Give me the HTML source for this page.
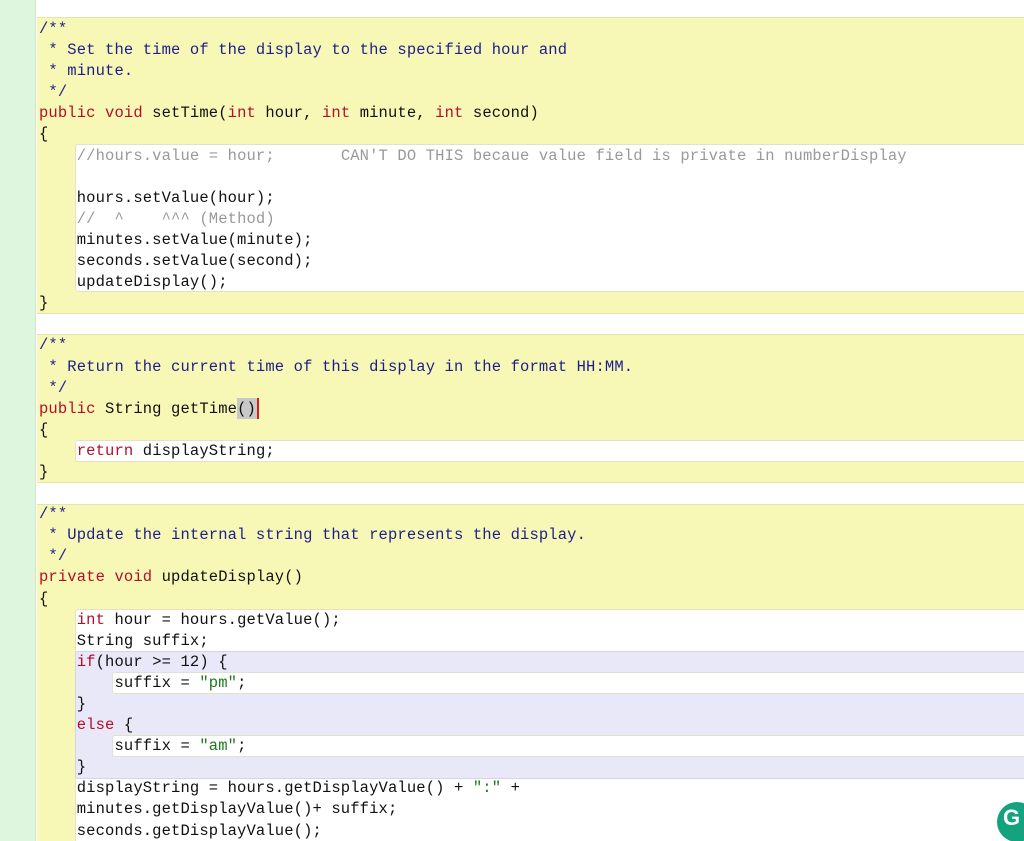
<!DOCTYPE html>
<html><head><style>
html,body{margin:0;width:1024px;height:841px;overflow:hidden}
body{background:#fff;position:relative;font-family:"Liberation Mono",monospace}
.r{position:absolute}
.gut{left:0;top:0;width:35px;height:841px;background:#def6de;border-right:1px solid #cfe8cf}
.y{background:#f7f7b6;border-top:1px solid #e6e6a8;border-bottom:1px solid #e6e6a8;left:37px;right:0}
.w{background:#fff;border:1px solid #e2e2c8;border-right:none;border-radius:3px 0 0 3px;right:0}
.l{background:#e8e8f8;border:1px solid #d4d4e6;border-right:none;border-radius:3px 0 0 3px;right:0}
pre{position:absolute;left:39px;top:19px;margin:0;font-family:"Liberation Mono",monospace;font-size:15.5px;letter-spacing:0.13px;line-height:21.1px;color:#111}
.c{color:#1e1e8a}.k{color:#b0102a}.g{color:#999}.s{color:#1a7a1a}
</style></head><body>
<div class="r gut"></div>
<div class="r y" style="top:17px;height:295px"></div>
<div class="r w" style="left:75px;top:144px;height:146px"></div>
<div class="r y" style="top:334px;height:147px"></div>
<div class="r w" style="left:75px;top:440px;height:20px"></div>
<div class="r y" style="top:504px;height:340px"></div>
<div class="r w" style="left:75px;top:609px;height:240px"></div>
<div class="r l" style="left:75px;top:651px;height:126px"></div>
<div class="r w" style="left:112px;top:672px;height:20px"></div>
<div class="r w" style="left:112px;top:735px;height:20px"></div>
<div class="r" style="left:237px;top:398px;width:20px;height:21px;background:#c8c8c8"></div>
<div class="r" style="left:257px;top:398px;width:2px;height:21px;background:#d02020"></div>
<pre><span class="c">/**
 * Set the time of the display to the specified hour and
 * minute.
 */</span>
<span class="k">public void</span> setTime(<span class="k">int</span> hour, <span class="k">int</span> minute, <span class="k">int</span> second)
{
    <span class="g">//hours.value = hour;       CAN'T DO THIS becaue value field is private in numberDisplay</span>

    hours.setValue(hour);
    <span class="g">//  ^    ^^^ (Method)</span>
    minutes.setValue(minute);
    seconds.setValue(second);
    updateDisplay();
}

<span class="c">/**
 * Return the current time of this display in the format HH:MM.
 */</span>
<span class="k">public</span> String getTime()
{
    <span class="k">return</span> displayString;
}

<span class="c">/**
 * Update the internal string that represents the display.
 */</span>
<span class="k">private void</span> updateDisplay()
{
    <span class="k">int</span> hour = hours.getValue();
    String suffix;
    <span class="k">if</span>(hour &gt;= 12) {
        suffix = <span class="s">"pm"</span>;
    }
    <span class="k">else</span> {
        suffix = <span class="s">"am"</span>;
    }
    displayString = hours.getDisplayValue() + <span class="s">":"</span> +
    minutes.getDisplayValue()+ suffix;
    seconds.getDisplayValue();
</pre>
<div class="r" style="left:997px;top:802px;width:40px;height:40px;border-radius:50%;background:#15a37f"></div>
<div class="r" style="left:1003px;top:805px;font:bold 22px 'Liberation Sans',sans-serif;color:#fff">G</div>
</body></html>
